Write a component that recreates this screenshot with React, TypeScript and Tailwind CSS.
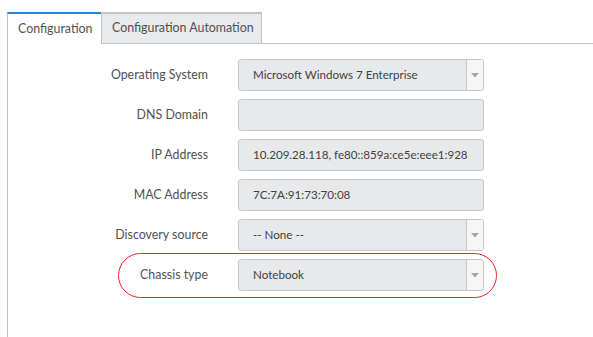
import React from 'react'

type Row = { label: string; value: string; select?: boolean; highlight?: boolean }

const ROWS: Row[] = [
  { label: 'Operating System', value: 'Microsoft Windows 7 Enterprise', select: true },
  { label: 'DNS Domain', value: '' },
  { label: 'IP Address', value: '10.209.28.118, fe80::859a:ce5e:eee1:928' },
  { label: 'MAC Address', value: '7C:7A:91:73:70:08' },
  { label: 'Discovery source', value: '-- None --', select: true },
  { label: 'Chassis type', value: 'Notebook', select: true, highlight: true },
]

function Caret() {
  return (
    <svg width="8" height="5" viewBox="0 0 8 5">
      <polygon points="0,0 8,0 4,4.5" fill="#a3a4a8" />
    </svg>
  )
}

export default function App() {
  return (
    <div className="w-[593px] h-[337px] bg-white overflow-hidden font-['Lato',sans-serif] text-[12.4px]">
      <div className="ml-[7px] pt-[12px] flex h-[44px]">
        <div className="w-[94px] h-[32px] border-t-2 border-l border-t-[#1e88e5] border-l-[#c4c4c6] bg-white flex items-center pl-[10px] text-[#505050]">
          Configuration
        </div>
        <div className="w-[161px] h-[32px] border-t-2 border-l border-r border-b border-[#c4c4c6] bg-[#e9eaec] flex items-center pl-[10px] text-[#505050]">
          Configuration Automation
        </div>
        <div className="flex-1 h-[32px] border-b border-[#c4c4c6]" />
      </div>
      <div className="ml-[7px] border-l border-[#c4c4c6] h-[293px] pt-[15px] flex flex-col gap-[8px]">
        {ROWS.map((r) => (
          <div key={r.label} className="relative flex items-center h-[32px]">
            {r.highlight && (
              <div className="absolute left-[110px] top-[-6px] w-[379px] h-[45px] rounded-full border border-[#e8252b]" />
            )}
            <div className="w-[200px] text-right text-[#505050]">{r.label}</div>
            <div className="ml-[30px] w-[246px] h-[32px] rounded-[3px] border border-[#c6c7ca] bg-[#e8e9eb] flex items-center overflow-hidden">
              <div className="flex-1 pl-[14px] text-[#404040] text-[11.6px] whitespace-nowrap">{r.value}</div>
              {r.select && (
                <div className="w-[17px] h-full bg-[#f6f6f6] border-l border-[#c6c7ca] flex items-center justify-center">
                  <Caret />
                </div>
              )}
            </div>
          </div>
        ))}
      </div>
    </div>
  )
}
